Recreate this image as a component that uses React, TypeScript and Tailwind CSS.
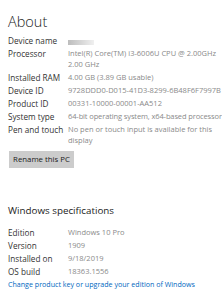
const deviceRows: { label: string; value: React.ReactNode }[] = [
  {
    label: 'Device name',
    value: (
      <div className="mt-[5px] h-[5px] w-[26px] bg-gradient-to-r from-[#bdbdbd] via-[#d6d6d6] to-[#f0f0f0]" />
    ),
  },
  { label: 'Processor', value: 'Intel(R) Core(TM) i3-6006U CPU @ 2.00GHz 2.00 GHz' },
  { label: 'Installed RAM', value: '4.00 GB (3.89 GB usable)' },
  {
    label: 'Device ID',
    value: <span className="whitespace-nowrap">9728DDD0-D015-41D3-8299-6B48F6F7997B</span>,
  },
  { label: 'Product ID', value: '00331-10000-00001-AA512' },
  {
    label: 'System type',
    value: (
      <span className="whitespace-nowrap tracking-[-0.12px]">
        64-bit operating system, x64-based processor
      </span>
    ),
  },
  { label: 'Pen and touch', value: 'No pen or touch input is available for this display' },
]

const specRows = [
  { label: 'Edition', value: 'Windows 10 Pro' },
  { label: 'Version', value: '1909' },
  { label: 'Installed on', value: '9/18/2019' },
  { label: 'OS build', value: '18363.1556' },
]

function InfoRow({ label, value }: { label: string; value: React.ReactNode }) {
  return (
    <div className="flex">
      <div className="w-[60px] shrink-0 whitespace-nowrap text-[8.2px] text-[#333333]">{label}</div>
      <div className="w-[150px] shrink-0 text-[7.5px] text-[#8a8a8a]">{value}</div>
    </div>
  )
}

export default function App() {
  return (
    <div
      className="h-[300px] w-[222px] overflow-hidden bg-white pl-[8px] leading-[11px]"
      style={{ fontFamily: '"Open Sans", "Noto Sans", sans-serif' }}
    >
      <h1 className="pt-[12px] text-[14.5px] font-light leading-[20px] text-[#1a1a1a]">About</h1>
      <div className="mt-[3px] flex flex-col gap-[2px]">
        {deviceRows.map((r) => (
          <InfoRow key={r.label} label={r.label} value={r.value} />
        ))}
      </div>
      <button className="ml-px mt-[5px] h-[17px] w-[65px] bg-[#cccccc] text-[7.8px] text-[#1a1a1a]">
        Rename this PC
      </button>
      <h2 className="mt-[36px] text-[9.8px] leading-[14px] text-[#1a1a1a]">Windows specifications</h2>
      <div className="mt-[9px] flex flex-col gap-[2px]">
        {specRows.map((r) => (
          <InfoRow key={r.label} label={r.label} value={r.value} />
        ))}
        <a className="whitespace-nowrap text-[7.1px] text-[#0067c0]">
          Change product key or upgrade your edition of Windows
        </a>
      </div>
    </div>
  )
}
